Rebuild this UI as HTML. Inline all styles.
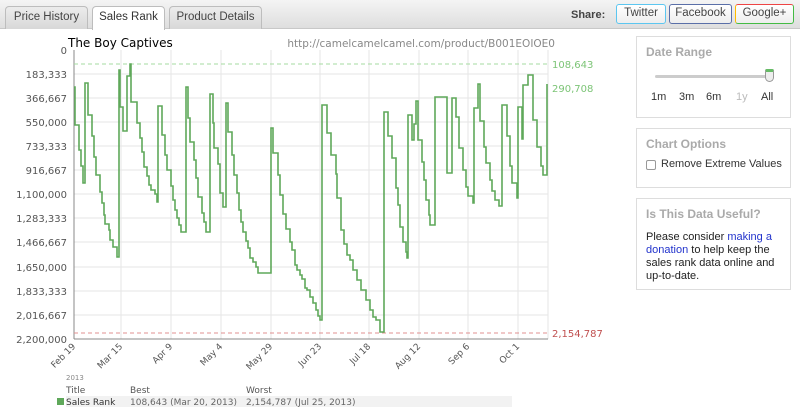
<!DOCTYPE html>
<html><head><meta charset="utf-8"><style>
*{margin:0;padding:0;box-sizing:border-box}
body{width:800px;height:418px;background:#fff;font-family:"Liberation Sans",Arial,sans-serif;position:relative;overflow:hidden}
.bar{position:absolute;left:0;top:0;width:800px;height:29px;background:linear-gradient(#f4f4f4,#dedede);border-bottom:1px solid #c8c8c8}
.tab{position:absolute;top:6px;height:23px;border:1px solid #bdbdbd;border-bottom:none;border-radius:4px 4px 0 0;background:linear-gradient(#ececec,#d8d8d8);font-size:11.5px;color:#444;text-align:center;line-height:21px}
.tab.on{background:#fff;height:24px;color:#333}
.share{position:absolute;top:9px;left:571px;font-size:11px;font-weight:bold;color:#444}
.btn{position:absolute;top:4px;height:20px;border-radius:3px;font-size:11.5px;color:#444;text-align:center;line-height:17px;background:linear-gradient(#fff,#eee)}
.box{position:absolute;left:636px;width:155px;border:1px solid #ddd;background:#fff}
.box h4{font-size:12px;color:#aaa;font-weight:bold;margin:8px 0 0 9px}
</style></head><body>
<div class="bar"></div>
<div class="tab" style="left:5px;width:83px">Price History</div>
<div class="tab on" style="left:92px;width:73px">Sales Rank</div>
<div class="tab" style="left:169px;width:93px">Product Details</div>
<div class="share">Share:</div>
<div class="btn" style="left:616px;width:50px;border:1px solid #5cc6f0">Twitter</div>
<div class="btn" style="left:669px;width:63px;border:1px solid #5a6fa8">Facebook</div>
<div class="btn" style="left:735px;width:59px;border:1px solid;border-color:#e44 #4b4 #4b4 #fb0">Google+</div>

<svg style="position:absolute;left:0;top:29px" width="630" height="389" viewBox="0 29 630 389" font-family="DejaVu Sans,Liberation Sans,sans-serif">
<g stroke="#e6e6e6" stroke-width="1">
<line x1="74" x2="548" y1="74" y2="74"/><line x1="74" x2="548" y1="98" y2="98"/><line x1="74" x2="548" y1="122" y2="122"/><line x1="74" x2="548" y1="146" y2="146"/><line x1="74" x2="548" y1="170" y2="170"/><line x1="74" x2="548" y1="194" y2="194"/><line x1="74" x2="548" y1="218" y2="218"/><line x1="74" x2="548" y1="242" y2="242"/><line x1="74" x2="548" y1="267" y2="267"/><line x1="74" x2="548" y1="291" y2="291"/><line x1="74" x2="548" y1="315" y2="315"/>
<line x1="121" x2="121" y1="50" y2="339"/><line x1="171" x2="171" y1="50" y2="339"/><line x1="221" x2="221" y1="50" y2="339"/><line x1="271" x2="271" y1="50" y2="339"/><line x1="320" x2="320" y1="50" y2="339"/><line x1="369" x2="369" y1="50" y2="339"/><line x1="419" x2="419" y1="50" y2="339"/><line x1="468" x2="468" y1="50" y2="339"/><line x1="518" x2="518" y1="50" y2="339"/><line x1="548" x2="548" y1="50" y2="339"/>
</g>
<line x1="74" x2="74" y1="50" y2="339" stroke="#888"/><line x1="74" x2="548" y1="339" y2="339" stroke="#888"/>
<line x1="74" x2="548" y1="64" y2="64" stroke="#a6dba0" stroke-dasharray="4,3"/>
<line x1="74" x2="548" y1="333" y2="333" stroke="#e09090" stroke-dasharray="4,3"/>
<polyline fill="none" stroke="#5fa85a" stroke-width="1.6" points="74,87 75,87 75,125 79,125 79,150 81,150 81,166 83,166 83,183 85,183 85,83 88,83 88,115 92,115 92,136 94,136 94,157 96,157 96,175 100,175 100,192 102,192 102,203 104,203 104,215 105,215 105,224 109,224 109,230 110,230 110,240 113,240 113,247 117,247 117,257 119,257 119,70 120,70 120,107 123,107 123,131 127,131 127,76 130,76 130,64 131,64 131,102 137,102 137,123 140,123 140,138 142,138 142,152 144,152 144,167 147,167 147,176 149,176 149,185 151,185 151,190 155,190 155,194 157,194 157,202 158,202 158,106 162,106 162,135 165,135 165,155 167,155 167,170 171,170 171,186 173,186 173,200 175,200 175,210 177,210 177,218 179,218 179,225 181,225 181,232 186,232 186,87 188,87 188,118 190,118 190,142 194,142 194,160 196,160 196,178 198,178 198,197 202,197 202,213 204,213 204,222 206,222 206,232 210,232 210,94 213,94 213,123 214,123 214,148 218,148 218,164 220,164 220,193 223,193 223,207 226,207 226,103 228,103 228,132 232,132 232,155 234,155 234,175 237,175 237,193 239,193 239,210 241,210 241,222 243,222 243,232 246,232 246,241 248,241 248,248 250,248 250,258 253,258 253,262 256,262 256,267 258,267 258,273 271,273 271,128 273,128 273,153 278,153 278,175 280,175 280,195 283,195 283,214 286,214 286,229 290,229 290,242 292,242 292,250 295,250 295,265 297,265 297,270 300,270 300,275 302,275 302,279 305,279 305,288 307,288 307,290 310,290 310,297 313,297 313,303 316,303 316,310 318,310 318,316 320,316 320,320 322,320 322,105 327,105 327,133 331,133 331,155 336,155 336,174 337,174 337,198 341,198 341,230 344,230 344,244 347,244 347,255 350,255 350,260 353,260 353,270 357,270 357,280 361,280 361,290 366,290 366,300 370,300 370,310 373,310 373,317 376,317 376,320 380,320 380,332 384,332 384,112 388,112 388,136 392,136 392,158 396,158 396,188 398,188 398,205 400,205 400,227 403,227 403,242 406,242 406,252 407,252 407,258 408,258 408,115 412,115 412,140 414,140 414,124 416,124 416,101 418,101 418,140 422,140 422,162 424,162 424,180 426,180 426,200 429,200 429,215 430,215 430,225 435,225 435,207 435,97 447,97 447,173 452,173 452,98 456,98 456,117 459,117 459,148 463,148 463,170 466,170 466,187 468,187 468,196 473,196 473,203 474,203 474,108 478,108 478,84 480,84 480,121 484,121 484,147 486,147 486,163 490,163 490,180 492,180 492,191 495,191 495,200 499,200 499,206 502,206 502,105 507,105 507,136 510,136 510,166 512,166 512,183 517,183 517,198 518,198 518,107 522,107 522,139 523,139 523,85 528,85 528,75 533,75 533,120 537,120 537,147 541,147 541,166 543,166 543,175 547,175 547,84"/>
<text x="68" y="47" font-family="DejaVu Sans,sans-serif" font-size="12" fill="#000">The Boy Captives</text>
<text x="555" y="47" font-size="10.5" fill="#888" text-anchor="end">http://camelcamelcamel.com/product/B001EOIOE0</text>
<g font-size="10" fill="#555" text-anchor="end">
<text x="67" y="54">0</text><text x="67" y="78">183,333</text><text x="67" y="102">366,667</text><text x="67" y="126">550,000</text><text x="67" y="150">733,333</text><text x="67" y="174">916,667</text><text x="67" y="198">1,100,000</text><text x="67" y="222">1,283,333</text><text x="67" y="246">1,466,667</text><text x="67" y="271">1,650,000</text><text x="67" y="295">1,833,333</text><text x="67" y="319">2,016,667</text><text x="67" y="343">2,200,000</text>
</g>
<text x="552" y="68" font-size="10" fill="#7cc476">108,643</text>
<text x="552" y="92" font-size="10" fill="#7cc476">290,708</text>
<text x="552" y="337" font-size="10" fill="#c05050">2,154,787</text>
<g font-size="9" fill="#555" text-anchor="end">
<text transform="translate(76,347) rotate(-45)">Feb 19</text><text transform="translate(123,347) rotate(-45)">Mar 15</text><text transform="translate(173,347) rotate(-45)">Apr 9</text><text transform="translate(223,347) rotate(-45)">May 4</text><text transform="translate(273,347) rotate(-45)">May 29</text><text transform="translate(322,347) rotate(-45)">Jun 23</text><text transform="translate(371,347) rotate(-45)">Jul 18</text><text transform="translate(421,347) rotate(-45)">Aug 12</text><text transform="translate(470,347) rotate(-45)">Sep 6</text><text transform="translate(520,347) rotate(-45)">Oct 1</text>
</g>
<text x="66" y="380" font-size="7" fill="#888">2013</text>
<g font-size="9" fill="#555"><text x="66" y="393">Title</text><text x="130" y="393">Best</text><text x="246" y="393">Worst</text></g>
<rect x="66" y="396" width="446" height="11" fill="#f2f2f2"/>
<rect x="57" y="398" width="7" height="7" fill="#5fa85a"/>
<g font-size="9" fill="#666"><text x="66" y="405" fill="#333">Sales Rank</text><text x="130" y="405">108,643 (Mar 20, 2013)</text><text x="246" y="405">2,154,787 (Jul 25, 2013)</text></g>
</svg>

<div class="box" style="top:36px;height:82px"><h4>Date Range</h4>
<div style="position:absolute;left:18px;top:38px;width:116px;height:3px;background:#ccc;border-radius:2px"></div>
<div style="position:absolute;left:128px;top:32px;width:9px;height:13px;background:#eee;border:1px solid #999;border-top:3px solid #6b6;border-radius:2px 2px 5px 5px"></div>
<div style="position:absolute;top:54px;left:0;width:155px;font-size:11px;color:#333">
<span style="position:absolute;left:14px">1m</span><span style="position:absolute;left:42px">3m</span><span style="position:absolute;left:69px">6m</span><span style="position:absolute;left:99px;color:#bbb">1y</span><span style="position:absolute;left:124px">All</span></div></div>
<div class="box" style="top:128px;height:60px"><h4>Chart Options</h4>
<div style="position:absolute;left:9px;top:31px;width:10px;height:10px;border:1px solid #999;border-radius:2px"></div>
<div style="position:absolute;left:24px;top:29px;font-size:11px;color:#333">Remove Extreme Values</div></div>
<div class="box" style="top:198px;height:92px"><h4>Is This Data Useful?</h4>
<div style="margin:10px 8px 0 9px;font-size:11px;line-height:13px;color:#222">Please consider <span style="color:#2233cc">making a donation</span> to help keep the sales rank data online and up-to-date.</div></div>
</body></html>
